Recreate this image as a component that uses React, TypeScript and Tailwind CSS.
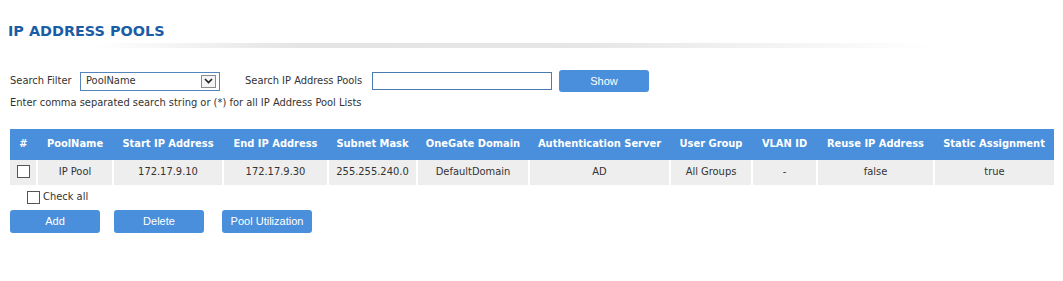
import React from "react";

const columns = [
  { label: "#", w: "w-[27px]" },
  { label: "PoolName", w: "w-[76px]" },
  { label: "Start IP Address", w: "w-[110px]" },
  { label: "End IP Address", w: "w-[105px]" },
  { label: "Subnet Mask", w: "w-[89px]" },
  { label: "OneGate Domain", w: "w-[112px]" },
  { label: "Authentication Server", w: "w-[141px]" },
  { label: "User Group", w: "w-[82px]" },
  { label: "VLAN ID", w: "w-[65px]" },
  { label: "Reuse IP Address", w: "w-[117px]" },
  { label: "Static Assignment", w: "w-[120px]" },
];

const row = [
  "IP Pool",
  "172.17.9.10",
  "172.17.9.30",
  "255.255.240.0",
  "DefaultDomain",
  "AD",
  "All Groups",
  "-",
  "false",
  "true",
];

function Box() {
  return <span className="inline-block w-[13px] h-[13px] border border-[#555] bg-white box-border" />;
}

function Button({ children }: { children: React.ReactNode }) {
  return (
    <button className="w-[90px] h-[23px] rounded-[3px] bg-[#4a8fdb] text-white text-[11px] font-['Liberation_Sans',Arial,sans-serif] leading-none">
      {children}
    </button>
  );
}

export default function App() {
  return (
    <div className="min-h-[281px] bg-white text-[11px] text-[#333] font-['DejaVu_Sans_Condensed','DejaVu_Sans',sans-serif] font-stretch-condensed">
      {/* Title */}
      <div className="pt-[22px] pl-2">
        <h1 className="text-[14.4px] leading-[18px] font-bold text-[#1b5ca6] font-['DejaVu_Sans',sans-serif] font-stretch-normal">
          IP ADDRESS POOLS
        </h1>
      </div>
      <div className="mt-[3px] h-[5px] w-[940px] bg-[linear-gradient(to_right,#fff_10%,#e4e4e4_32%,#e6e6e6_62%,#fff_100%)]" />

      {/* Search */}
      <div className="mt-[22px] pl-[10px] flex items-center h-[22px]">
        <span className="w-[70px]">Search Filter</span>
        <div className="w-[140px] h-[19px] border border-[#5585bb] flex items-center justify-between pl-[5px] pr-[3px] box-border">
          <span>PoolName</span>
          <span className="w-[15px] h-[13px] border border-[#8a8a8a] bg-[#f4f4f4] flex items-center justify-center">
            <svg width="9" height="6" viewBox="0 0 9 6">
              <path d="M1 1l3.5 3.5L8 1" fill="none" stroke="#222" strokeWidth="1.6" />
            </svg>
          </span>
        </div>
        <span className="ml-[25px] w-[127px]">Search IP Address Pools</span>
        <div className="w-[180px] h-[18px] border border-[#4a7bb0] box-border" />
        <button className="ml-[7px] w-[90px] h-[22px] rounded-[3px] bg-[#4a8fdb] text-white text-[11px] font-['Liberation_Sans',Arial,sans-serif]">
          Show
        </button>
      </div>
      <p className="mt-[4px] pl-[10px] leading-[14px]">
        Enter comma separated search string or (*) for all IP Address Pool Lists
      </p>

      {/* Table */}
      <table className="mt-[19px] ml-[10px] w-[1044px] table-fixed border-collapse">
        <thead>
          <tr className="h-[31px] bg-[#4a8fdb] text-white">
            {columns.map((c) => (
              <th key={c.label} className={`${c.w} font-bold text-center p-0 whitespace-nowrap`}>
                {c.label}
              </th>
            ))}
          </tr>
        </thead>
        <tbody>
          <tr className="h-[25px] bg-[#eeeeee]">
            <td className="text-center p-0">
              <span className="inline-flex mt-[3px]">
                <Box />
              </span>
            </td>
            {row.map((v, i) => (
              <td key={i} className="text-center p-0 border-l-[2px] border-white whitespace-nowrap">
                {v}
              </td>
            ))}
          </tr>
        </tbody>
      </table>

      <div className="mt-[6px] pl-[27px] flex items-center gap-[3px] h-[13px]">
        <Box />
        <span>Check all</span>
      </div>

      <div className="mt-[6px] pl-[10px] flex gap-[14px]">
        <Button>Add</Button>
        <div className="flex gap-[18px]">
          <Button>Delete</Button>
          <Button>Pool Utilization</Button>
        </div>
      </div>
    </div>
  );
}
